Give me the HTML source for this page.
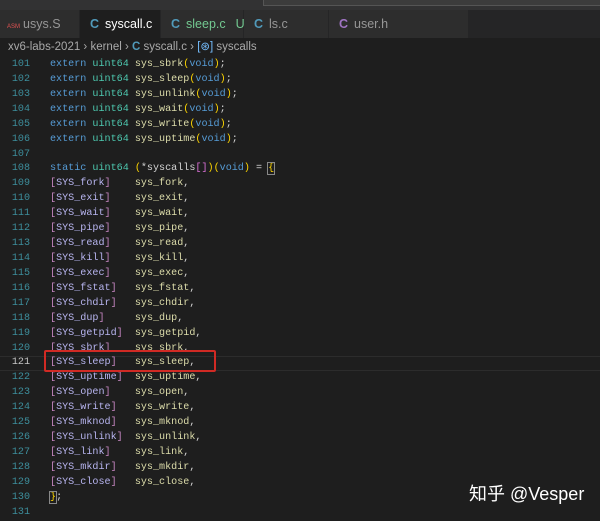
<!DOCTYPE html>
<html><head><style>
body{margin:0;width:600px;height:518px;background:#1e1e1e;overflow:hidden;font-family:"Liberation Sans",sans-serif;position:relative}
.title{position:absolute;top:0;left:0;width:600px;height:10px;background:#323233}
.title .s{position:absolute;left:263px;top:0;width:337px;height:5px;border:1px solid #555;border-top:none;background:#3c3c3c}
.tabs{position:absolute;top:10px;left:0;width:600px;height:28px;background:#252526}
.tab{position:absolute;top:0;height:28px;line-height:28px;font-size:12.5px;color:#969696;background:#2d2d2d}
.tab b{font-weight:bold;margin-right:6px}
.bc{position:absolute;top:38px;left:8px;height:18px;line-height:18px;font-size:11.5px;color:#a9a9a9}
.code{position:absolute;top:58px;left:0;width:600px;font-family:"Liberation Mono",monospace;font-size:10.1px}
.l{height:14.93px;line-height:14.93px;white-space:pre;position:relative}
.n{display:inline-block;width:30px;text-align:right;color:#3d8e9c;margin-right:20px}
.k{color:#569cd6}.t{color:#4ec9b0}.f{color:#dcdcaa}.p{color:#ffd700}.v{color:#569cd6}.b{color:#c586c0}.e{color:#b8b5f0}.w{color:#d4d4d4}.q{color:#da70d6}
.cur{box-shadow:inset 0 1px 0 #2c2c2c,inset 0 -1px 0 #2c2c2c}
.box{position:absolute;left:44px;top:350px;width:168px;height:18px;border:2px solid #d02a24;border-radius:2px}
.wm{position:absolute;left:469px;top:480px;color:#fff;font-size:18px;font-family:"Liberation Sans","Noto Sans CJK SC",sans-serif}
</style></head><body>
<div class="title"><div class="s"></div></div>
<div class="tabs">
<div class="tab" style="left:0;width:79px;padding-left:7px;box-sizing:border-box"><span style="color:#e05252;font-size:6px;margin-right:3px">ASM</span>usys.S</div>
<div class="tab" style="left:80px;width:80px;background:#1e1e1e;color:#fff;padding-left:10px;box-sizing:border-box"><b style="color:#519aba">C</b>syscall.c<span style="margin-left:14px;color:#ccc">✕</span></div>
<div class="tab" style="left:161px;width:82px;padding-left:10px;box-sizing:border-box;color:#73c991"><b style="color:#519aba">C</b>sleep.c<span style="margin-left:10px">U</span></div>
<div class="tab" style="left:244px;width:84px;padding-left:10px;box-sizing:border-box"><b style="color:#519aba">C</b>ls.c</div>
<div class="tab" style="left:329px;width:139px;padding-left:10px;box-sizing:border-box"><b style="color:#a074c4">C</b>user.h</div>
</div>
<div class="bc">xv6-labs-2021 › kernel › <b style="color:#519aba">C</b> syscall.c › <span style="color:#75beff">[⊛]</span> syscalls</div>
<div class="code">
<div class="l"><span class="n">101</span><span class="k">extern</span> <span class="t">uint64</span> <span class="f">sys_sbrk</span><span class="p">(</span><span class="v">void</span><span class="p">)</span><span class="w">;</span></div>
<div class="l"><span class="n">102</span><span class="k">extern</span> <span class="t">uint64</span> <span class="f">sys_sleep</span><span class="p">(</span><span class="v">void</span><span class="p">)</span><span class="w">;</span></div>
<div class="l"><span class="n">103</span><span class="k">extern</span> <span class="t">uint64</span> <span class="f">sys_unlink</span><span class="p">(</span><span class="v">void</span><span class="p">)</span><span class="w">;</span></div>
<div class="l"><span class="n">104</span><span class="k">extern</span> <span class="t">uint64</span> <span class="f">sys_wait</span><span class="p">(</span><span class="v">void</span><span class="p">)</span><span class="w">;</span></div>
<div class="l"><span class="n">105</span><span class="k">extern</span> <span class="t">uint64</span> <span class="f">sys_write</span><span class="p">(</span><span class="v">void</span><span class="p">)</span><span class="w">;</span></div>
<div class="l"><span class="n">106</span><span class="k">extern</span> <span class="t">uint64</span> <span class="f">sys_uptime</span><span class="p">(</span><span class="v">void</span><span class="p">)</span><span class="w">;</span></div>
<div class="l"><span class="n">107</span></div>
<div class="l"><span class="n">108</span><span class="k">static</span> <span class="t">uint64</span> <span class="p">(</span><span class="w">*syscalls</span><span class="q">[]</span><span class="p">)(</span><span class="v">void</span><span class="p">)</span> <span class="w">=</span> <span class="p" style="outline:1px solid #888">{</span></div>
<div class="l"><span class="n">109</span><span class="b">[</span><span class="e">SYS_fork</span><span class="b">]</span>    <span class="f">sys_fork</span><span class="w">,</span></div>
<div class="l"><span class="n">110</span><span class="b">[</span><span class="e">SYS_exit</span><span class="b">]</span>    <span class="f">sys_exit</span><span class="w">,</span></div>
<div class="l"><span class="n">111</span><span class="b">[</span><span class="e">SYS_wait</span><span class="b">]</span>    <span class="f">sys_wait</span><span class="w">,</span></div>
<div class="l"><span class="n">112</span><span class="b">[</span><span class="e">SYS_pipe</span><span class="b">]</span>    <span class="f">sys_pipe</span><span class="w">,</span></div>
<div class="l"><span class="n">113</span><span class="b">[</span><span class="e">SYS_read</span><span class="b">]</span>    <span class="f">sys_read</span><span class="w">,</span></div>
<div class="l"><span class="n">114</span><span class="b">[</span><span class="e">SYS_kill</span><span class="b">]</span>    <span class="f">sys_kill</span><span class="w">,</span></div>
<div class="l"><span class="n">115</span><span class="b">[</span><span class="e">SYS_exec</span><span class="b">]</span>    <span class="f">sys_exec</span><span class="w">,</span></div>
<div class="l"><span class="n">116</span><span class="b">[</span><span class="e">SYS_fstat</span><span class="b">]</span>   <span class="f">sys_fstat</span><span class="w">,</span></div>
<div class="l"><span class="n">117</span><span class="b">[</span><span class="e">SYS_chdir</span><span class="b">]</span>   <span class="f">sys_chdir</span><span class="w">,</span></div>
<div class="l"><span class="n">118</span><span class="b">[</span><span class="e">SYS_dup</span><span class="b">]</span>     <span class="f">sys_dup</span><span class="w">,</span></div>
<div class="l"><span class="n">119</span><span class="b">[</span><span class="e">SYS_getpid</span><span class="b">]</span>  <span class="f">sys_getpid</span><span class="w">,</span></div>
<div class="l"><span class="n">120</span><span class="b">[</span><span class="e">SYS_sbrk</span><span class="b">]</span>    <span class="f">sys_sbrk</span><span class="w">,</span></div>
<div class="l cur"><span class="n" style="color:#c6c6c6">121</span><span class="b">[</span><span class="e">SYS_sleep</span><span class="b">]</span>   <span class="f">sys_sleep</span><span class="w">,</span></div>
<div class="l"><span class="n">122</span><span class="b">[</span><span class="e">SYS_uptime</span><span class="b">]</span>  <span class="f">sys_uptime</span><span class="w">,</span></div>
<div class="l"><span class="n">123</span><span class="b">[</span><span class="e">SYS_open</span><span class="b">]</span>    <span class="f">sys_open</span><span class="w">,</span></div>
<div class="l"><span class="n">124</span><span class="b">[</span><span class="e">SYS_write</span><span class="b">]</span>   <span class="f">sys_write</span><span class="w">,</span></div>
<div class="l"><span class="n">125</span><span class="b">[</span><span class="e">SYS_mknod</span><span class="b">]</span>   <span class="f">sys_mknod</span><span class="w">,</span></div>
<div class="l"><span class="n">126</span><span class="b">[</span><span class="e">SYS_unlink</span><span class="b">]</span>  <span class="f">sys_unlink</span><span class="w">,</span></div>
<div class="l"><span class="n">127</span><span class="b">[</span><span class="e">SYS_link</span><span class="b">]</span>    <span class="f">sys_link</span><span class="w">,</span></div>
<div class="l"><span class="n">128</span><span class="b">[</span><span class="e">SYS_mkdir</span><span class="b">]</span>   <span class="f">sys_mkdir</span><span class="w">,</span></div>
<div class="l"><span class="n">129</span><span class="b">[</span><span class="e">SYS_close</span><span class="b">]</span>   <span class="f">sys_close</span><span class="w">,</span></div>
<div class="l"><span class="n">130</span><span class="p" style="outline:1px solid #888">}</span><span class="w">;</span></div>
<div class="l"><span class="n">131</span></div>
</div>
<div class="box"></div>
<div class="wm">知乎 @Vesper</div>
</body></html>
